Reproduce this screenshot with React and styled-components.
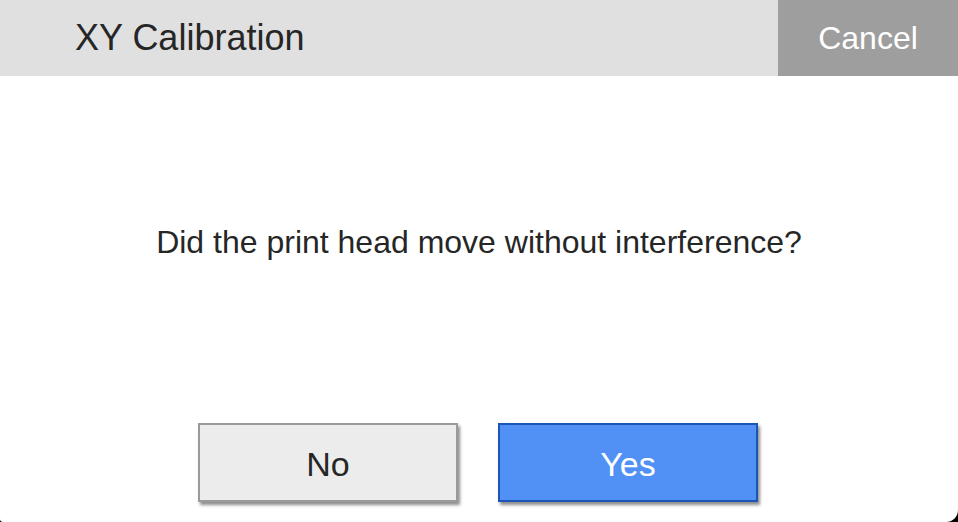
import React from "react";
import styled, { createGlobalStyle } from "styled-components";

const GlobalStyle = createGlobalStyle`
  html, body {
    margin: 0;
    padding: 0;
    background: #000;
  }
  body {
    font-family: "Liberation Sans", Arial, sans-serif;
  }
`;

const Screen = styled.div`
  width: 958px;
  height: 522px;
  display: flex;
  flex-direction: column;
  background: #ffffff;
  border-bottom-right-radius: 12px;
  border-bottom-left-radius: 3px;
  overflow: hidden;
`;

const Header = styled.div`
  height: 76px;
  display: flex;
  align-items: stretch;
  background: #e0e0e0;
`;

const Title = styled.div`
  flex: 1;
  display: flex;
  align-items: center;
  padding-left: 75px;
  font-size: 36px;
  color: #262626;
`;

const CancelButton = styled.div`
  width: 180px;
  display: flex;
  align-items: center;
  justify-content: center;
  background: #9e9e9e;
  color: #ffffff;
  font-size: 32px;
`;

const Body = styled.div`
  flex: 1;
  display: flex;
  flex-direction: column;
  align-items: center;
`;

const Question = styled.div`
  margin-top: 148px;
  font-size: 32px;
  line-height: 37px;
  color: #262626;
`;

const Buttons = styled.div`
  margin-top: auto;
  margin-bottom: 20px;
  margin-right: 2px;
  display: flex;
  gap: 40px;
`;

const ChoiceButton = styled.div`
  width: 260px;
  height: 79px;
  box-sizing: border-box;
  display: flex;
  align-items: center;
  justify-content: center;
  padding-top: 4px;
  font-size: 34px;
  background: ${(p) => (p.primary ? "#5191f5" : "#ececec")};
  color: ${(p) => (p.primary ? "#ffffff" : "#262626")};
  border: 2px solid ${(p) => (p.primary ? "#1d55b5" : "#9a9a9a")};
  box-shadow: 2px 3px 3px rgba(0, 0, 0, 0.45);
`;

export default function App() {
  return (
    <>
      <GlobalStyle />
      <Screen>
        <Header>
          <Title>XY Calibration</Title>
          <CancelButton>Cancel</CancelButton>
        </Header>
        <Body>
          <Question>Did the print head move without interference?</Question>
          <Buttons>
            <ChoiceButton>No</ChoiceButton>
            <ChoiceButton primary>Yes</ChoiceButton>
          </Buttons>
        </Body>
      </Screen>
    </>
  );
}
